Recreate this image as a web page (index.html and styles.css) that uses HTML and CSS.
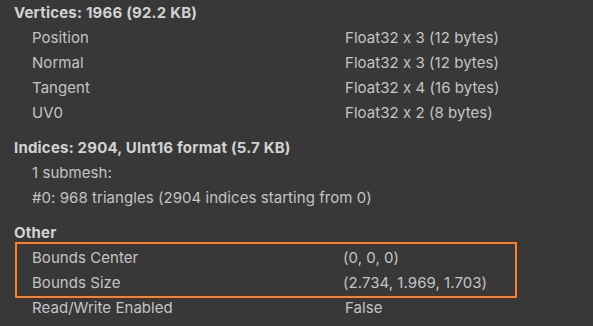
FILE: index.html
```html
<!DOCTYPE html>
<html lang="en">

<head>
  <meta charset="UTF-8">
  <title>Mesh Info</title>
  <link rel="stylesheet" href="styles.css">
</head>

<body>
  <div class="panel">
    <!-- Vertices -->
    <div class="section">
      <div class="heading">Vertices: 1966 (92.2 KB)</div>
      <div class="row"><span class="label">Position</span><span class="value">Float32 x 3 (12 bytes)</span></div>
      <div class="row"><span class="label">Normal</span><span class="value">Float32 x 3 (12 bytes)</span></div>
      <div class="row"><span class="label">Tangent</span><span class="value">Float32 x 4 (16 bytes)</span></div>
      <div class="row"><span class="label">UV0</span><span class="value">Float32 x 2 (8 bytes)</span></div>
    </div>

    <!-- Indices -->
    <div class="section">
      <div class="heading">Indices: 2904, UInt16 format (5.7 KB)</div>
      <div class="row"><span class="label">1 submesh:</span></div>
      <div class="row"><span class="label">#0: 968 triangles (2904 indices starting from 0)</span></div>
    </div>

    <!-- Other -->
    <div class="section">
      <div class="heading">Other</div>
      <div class="highlight">
        <div class="row"><span class="label">Bounds Center</span><span class="value">(0, 0, 0)</span></div>
        <div class="row"><span class="label">Bounds Size</span><span class="value">(2.734, 1.969, 1.703)</span></div>
      </div>
      <div class="row"><span class="label">Read/Write Enabled</span><span class="value">False</span></div>
    </div>
  </div>
</body>

</html>
```

FILE: styles.css
```css
body {
  margin: 0;
  background-color: #383838;
  font-family: Inter, "Noto Sans", sans-serif;
  font-size: 15px;
  font-feature-settings: "calt" 0;
  letter-spacing: 0.05px;
  color: #c4c4c4;
}

.panel {
  display: flex;
  flex-direction: column;
  gap: 10px;
  padding: 0 0 0 14px;
}

.section {
  display: flex;
  flex-direction: column;
}

.heading {
  height: 25px;
  line-height: 25px;
  font-weight: bold;
  letter-spacing: 0.2px;
  color: #d2d2d2;
}

.row {
  display: flex;
  height: 25px;
  line-height: 25px;
}

.label {
  width: 313px;
  padding-left: 18px;
  white-space: nowrap;
}

.value {
  white-space: nowrap;
}

.highlight {
  width: 498px;
  margin-left: 1px;
  border: 2px solid #ff7f27;
  margin-top: -3px;
  margin-bottom: -3px;
  padding: 1px 0;
}

.highlight .label {
  padding-left: 15px;
  width: 311px;
}
```
